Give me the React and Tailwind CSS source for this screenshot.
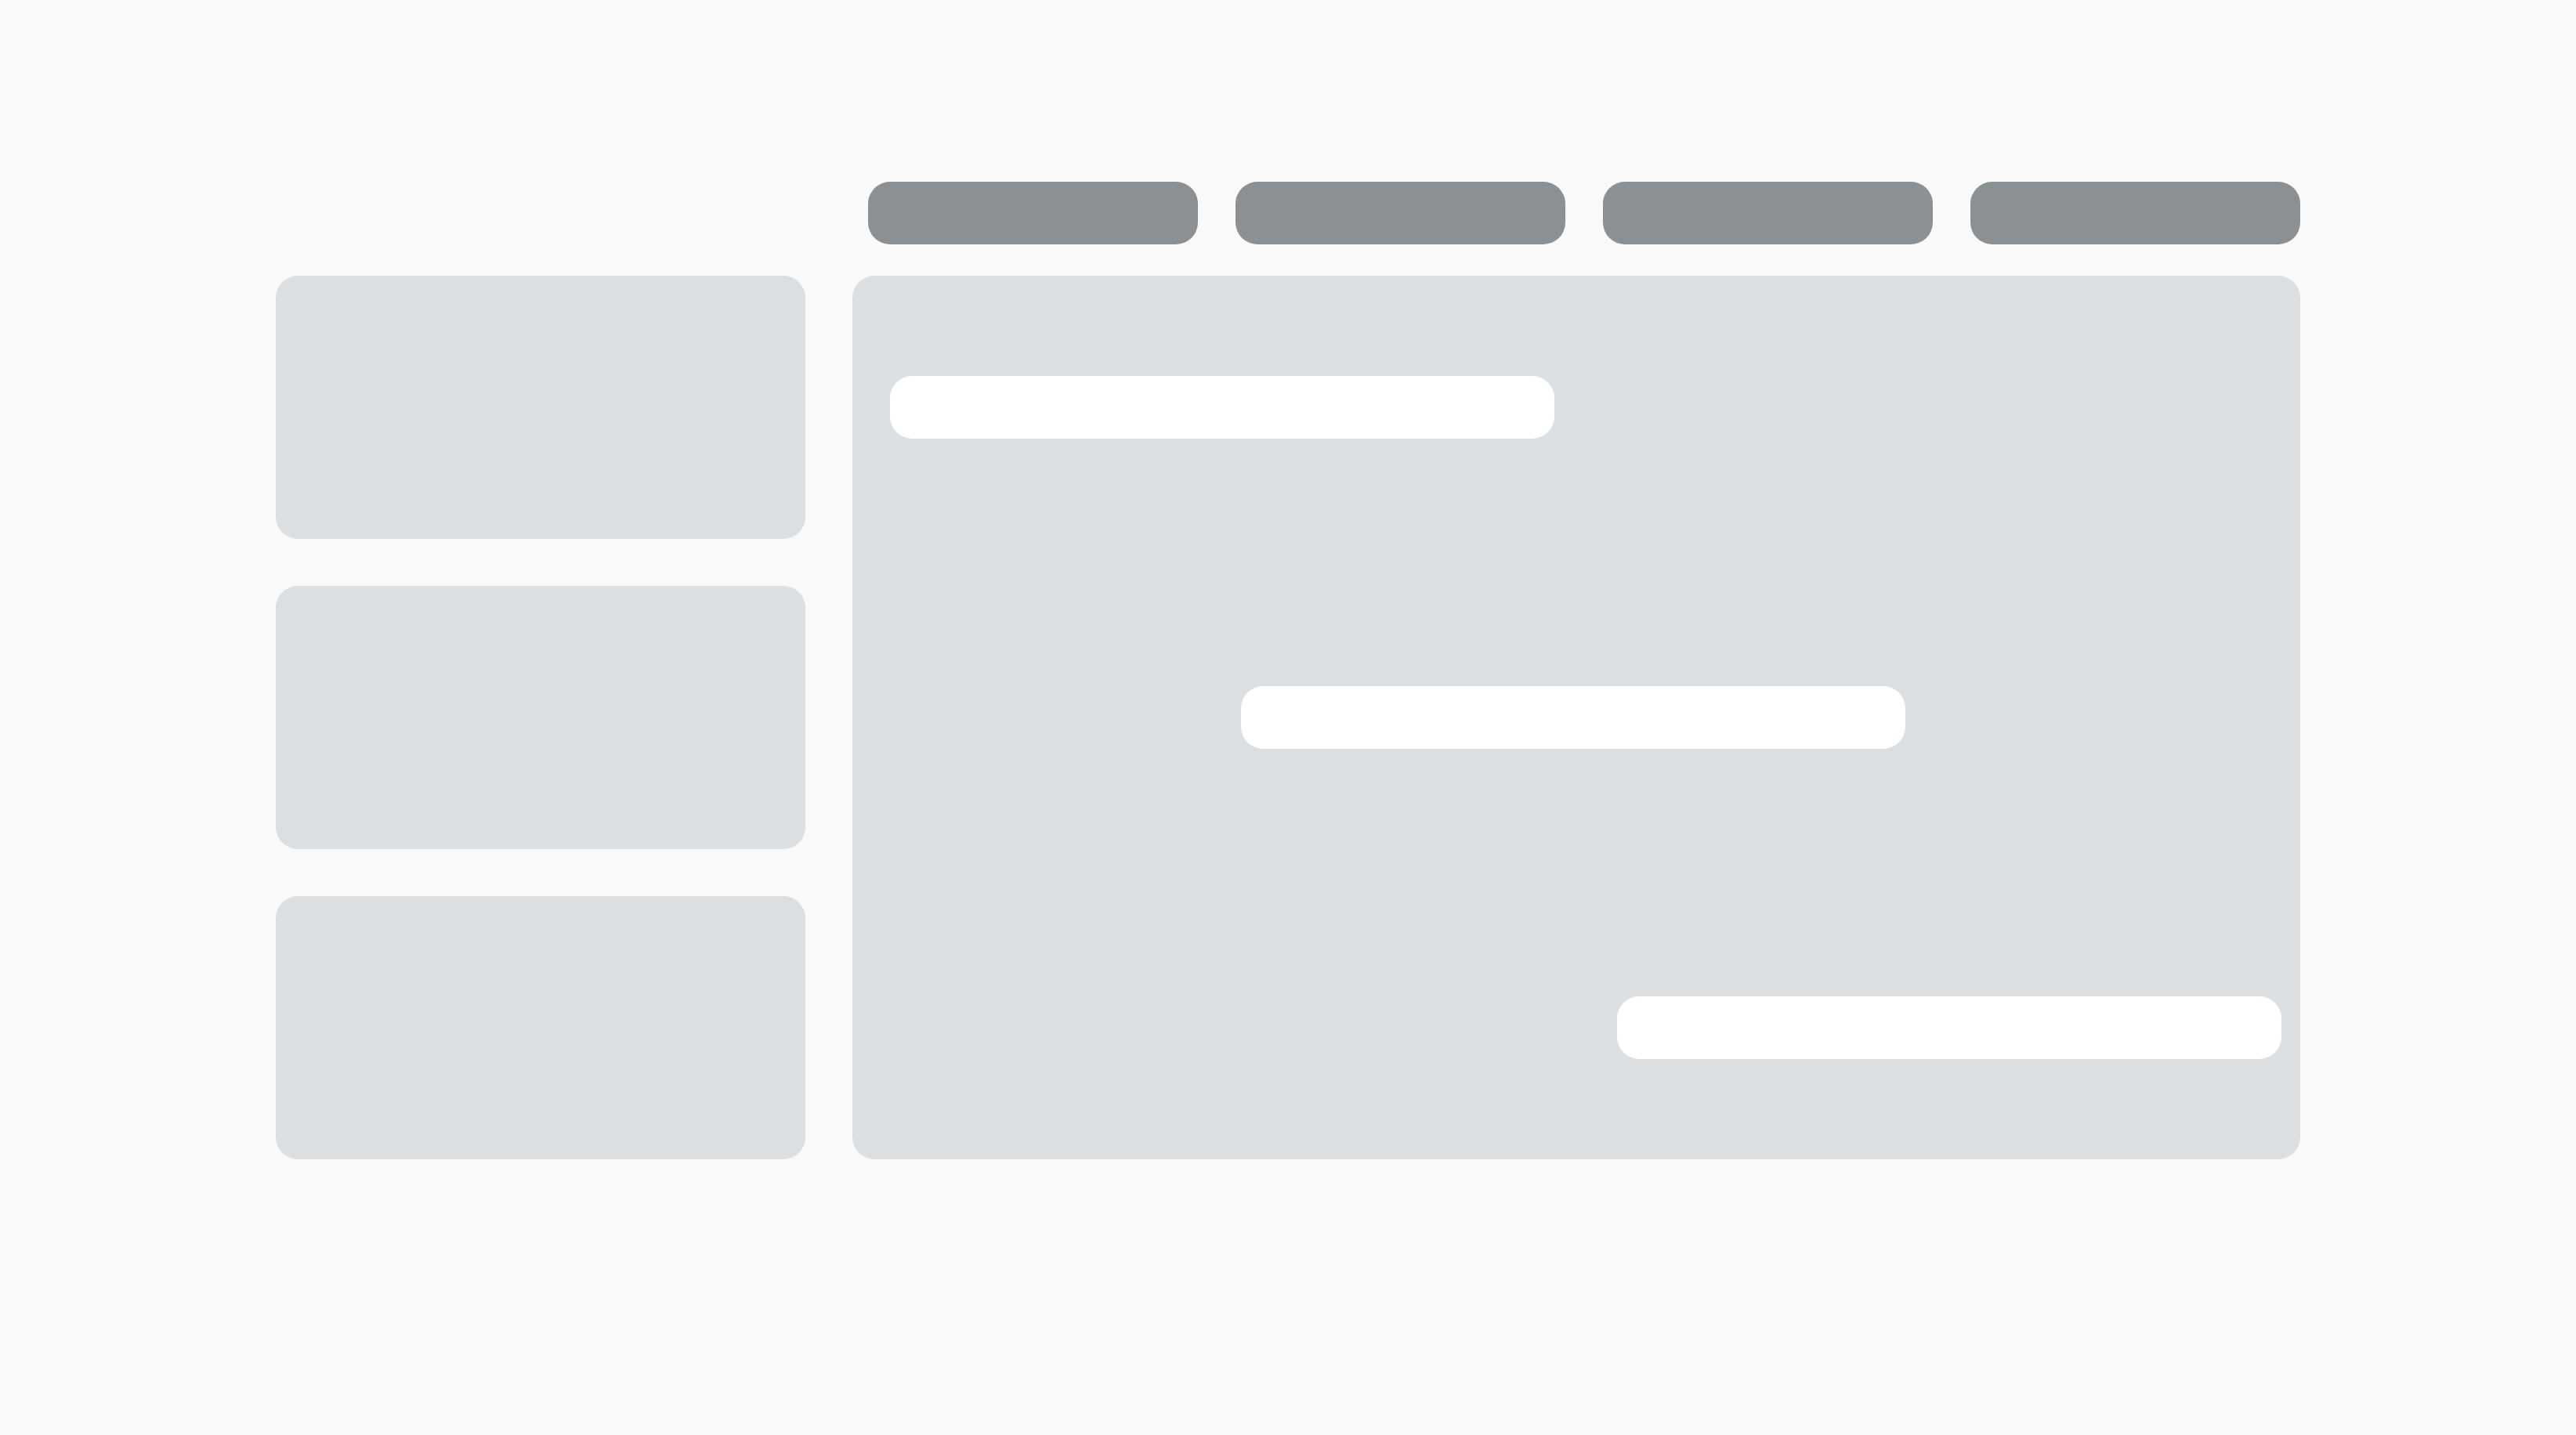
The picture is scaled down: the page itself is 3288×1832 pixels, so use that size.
export default function App() {
  const tabs = [0, 1, 2, 3];
  const cards = [0, 1, 2];
  return (
    <div className="min-h-[1832px] w-full bg-[#f9f9f9] pt-[232px] pb-[352px]">
      <div className="mx-auto w-[2584px] flex flex-col gap-[40px]">
        <div className="flex gap-[48px] h-[80px] pl-[756px]">
          {tabs.map((t) => (
            <div key={t} className="flex-1 rounded-[28px] bg-[#8b9094]" />
          ))}
        </div>
        <div className="flex gap-[60px] h-[1128px]">
          <div className="w-[676px] flex flex-col gap-[60px]">
            {cards.map((c) => (
              <div key={c} className="h-[336px] rounded-[28px] bg-[#dbdfe2]" />
            ))}
          </div>
          <div className="flex-1 rounded-[28px] bg-[#dbdfe2] pt-[128px] pb-[128px] flex flex-col gap-[316px]">
            <div className="ml-[48px] w-[848px] h-[80px] rounded-[28px] bg-white" />
            <div className="ml-[496px] w-[848px] h-[80px] rounded-[28px] bg-white" />
            <div className="ml-[976px] w-[848px] h-[80px] rounded-[28px] bg-white" />
          </div>
        </div>
      </div>
    </div>
  );
}
